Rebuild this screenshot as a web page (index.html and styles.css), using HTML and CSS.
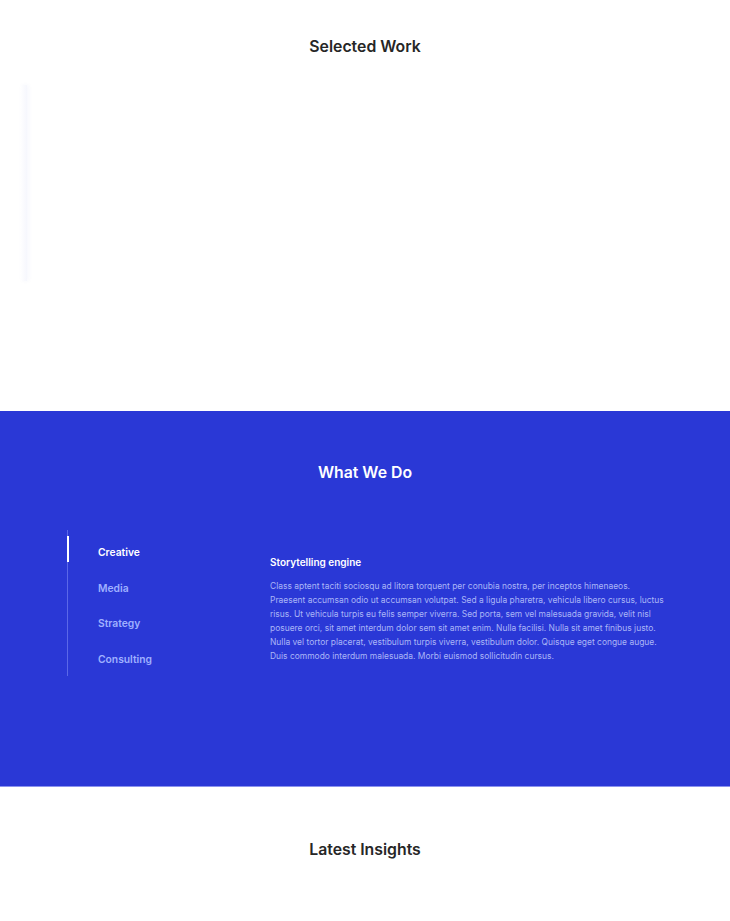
FILE: index.html
```html
<!DOCTYPE html>
<html lang="en">
<head>
<meta charset="utf-8">
<title>Agency</title>
<link rel="stylesheet" href="styles.css">
</head>
<body>
<section class="work">
  <h2 class="section-title">Selected Work</h2>
  <div class="slider">
    <div class="card-edge"></div>
  </div>
</section>
<section class="services">
  <h2 class="section-title light">What We Do</h2>
  <div class="services-body">
    <ul class="tabs">
      <li class="tab active">Creative</li>
      <li class="tab">Media</li>
      <li class="tab">Strategy</li>
      <li class="tab">Consulting</li>
    </ul>
    <div class="tab-content">
      <h3 class="content-title">Storytelling engine</h3>
      <p class="content-text">Class aptent taciti sociosqu ad litora torquent per conubia nostra, per inceptos himenaeos. Praesent accumsan odio ut accumsan volutpat. Sed a ligula pharetra, vehicula libero cursus, luctus risus. Ut vehicula turpis eu felis semper viverra. Sed porta, sem vel malesuada gravida, velit nisl posuere orci, sit amet interdum dolor sem sit amet enim. Nulla facilisi. Nulla sit amet finibus justo. Nulla vel tortor placerat, vestibulum turpis viverra, vestibulum dolor. Quisque eget congue augue. Duis commodo interdum malesuada. Morbi euismod sollicitudin cursus.</p>
    </div>
  </div>
</section>
<section class="insights">
  <h2 class="section-title">Latest Insights</h2>
</section>
</body>
</html>
```
FILE: styles.css
```css
* { box-sizing: border-box; }
html, body { margin: 0; padding: 0; }
body {
  font-family: "Inter", "Lato", sans-serif;
  background: #fff;
  color: #262626;
  width: 730px;
  overflow: hidden;
}
.section-title {
  margin: 0;
  text-align: center;
  font-size: 15.8px;
  font-weight: 600;
  line-height: 20px;
  color: #262626;
}
.section-title.light { color: #fff; }

.work {
  height: 411px;
  padding-top: 37px;
}
.slider {
  margin-top: 28px;
  height: 196px;
  padding-left: 20px;
}
.card-edge {
  width: 7px;
  height: 196px;
  background: linear-gradient(to right, #ffffff, #f6f7fd);
  box-shadow: 2px 0 4px rgba(60, 70, 200, 0.04);
}

.services {
  background: #2a38d6;
  height: 376px;
  padding-top: 52px;
  border-bottom: 1px solid #8b93ee;
}
.services-body {
  display: flex;
  margin-top: 47px;
  padding-left: 67px;
}
.tabs {
  list-style: none;
  margin: 0;
  padding: 6px 0 6px;
  width: 203px;
  border-left: 1px solid rgba(150, 165, 255, 0.45);
  height: 146px;
}
.tab {
  position: relative;
  height: 35.5px;
  line-height: 26px;
  padding-top: 3px;
  padding-left: 30px;
  font-size: 10.3px;
  font-weight: 600;
  color: #9fb0ff;
}
.tab.active { color: #fff; }
.tab.active::before {
  content: "";
  position: absolute;
  left: -1.5px;
  top: 0;
  width: 2px;
  height: 26px;
  background: #fff;
}
.tab-content {
  padding-top: 25px;
  width: 397px;
}
.content-title {
  margin: 0;
  font-size: 10px;
  font-weight: 600;
  color: #fff;
  line-height: 14px;
}
.content-text {
  margin: 10px 0 0;
  font-size: 8.45px;
  line-height: 14px;
  color: #aab6f7;
}

.insights {
  padding-top: 53px;
}
```
